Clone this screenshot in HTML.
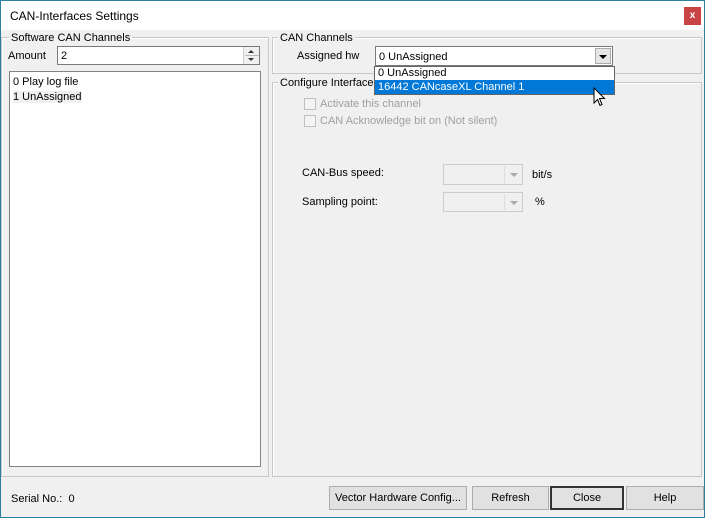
<!DOCTYPE html>
<html><head><style>
*{box-sizing:border-box;margin:0;padding:0}
html,body{width:705px;height:518px;overflow:hidden}
body{background:#f0f0f0;font-family:"Liberation Sans",Arial,sans-serif;font-size:11px;color:#000;position:relative;white-space:nowrap}
.a{position:absolute}
.win{left:0;top:0;width:705px;height:518px;border:1px solid #2b7fa0}
.title{left:1px;top:1px;width:703px;height:29px;background:#fff}
.gb{border:1px solid #c8c8c8;box-shadow:inset 1px 1px 0 #fff}
.lbl{background:#f0f0f0;padding:0 2px;line-height:13px}
.in{background:#fff;border:1px solid #7a7a7a}
.btn{background:#e1e1e1;border:1px solid #adadad;text-align:center;line-height:23px}
.dis{color:#a0a0a0}
.cb{width:12px;height:12px;border:1px solid #c0c0c0;background:#f4f4f4}
</style></head><body>
<div class="a win"></div>
<div class="a title"></div>
<div class="a" style="left:10px;top:9px;font-size:12px">CAN-Interfaces Settings</div>
<div class="a" style="left:684px;top:7px;width:17px;height:18px;background:#c94545;color:#fff;font-size:10px;font-weight:bold;text-align:center;line-height:17px">x</div>

<div class="a gb" style="left:1px;top:37px;width:268px;height:440px"></div>
<div class="a lbl" style="left:9px;top:32px">Software CAN Channels</div>
<div class="a" style="left:8px;top:50px">Amount</div>
<div class="a in" style="left:57px;top:46px;width:203px;height:19px;padding:3px 3px">2</div>
<div class="a" style="left:243px;top:47px;width:16px;height:17px;background:#f0f0f0;border-left:1px solid #ccc">
<div style="position:absolute;left:4px;top:3px;border:3px solid transparent;border-top:0;border-bottom:3px solid #333"></div>
<div style="position:absolute;left:1px;top:8px;width:14px;height:1px;background:#bbb"></div>
<div style="position:absolute;left:4px;top:11px;border:3px solid transparent;border-bottom:0;border-top:3px solid #333"></div></div>
<div class="a in" style="left:9px;top:71px;width:252px;height:396px;border-color:#828282">
<div style="padding:3px 3px 0;line-height:15px">0 Play log file<br><span style="background:#f0f0f0">1 UnAssigned</span></div></div>

<div class="a gb" style="left:272px;top:37px;width:430px;height:37px"></div>
<div class="a lbl" style="left:278px;top:32px">CAN Channels</div>
<div class="a" style="left:297px;top:50px">Assigned hw</div>
<div class="a in" style="left:375px;top:46px;width:238px;height:20px;padding:4px 3px">0 UnAssigned</div>
<div class="a" style="left:595px;top:48px;width:16px;height:16px;background:#e6e6e6;border:1px solid #aaa"><div style="position:absolute;left:3px;top:6px;border:4px solid transparent;border-bottom:0;border-top:4px solid #000"></div></div>

<div class="a gb" style="left:272px;top:82px;width:430px;height:395px"></div>
<div class="a lbl" style="left:278px;top:77px">Configure Interface</div>
<div class="a cb" style="left:304px;top:98px"></div>
<div class="a dis" style="left:320px;top:98px">Activate this channel</div>
<div class="a cb" style="left:304px;top:115px"></div>
<div class="a dis" style="left:320px;top:115px">CAN Acknowledge bit on (Not silent)</div>
<div class="a" style="left:302px;top:167px">CAN-Bus speed:</div>
<div class="a" style="left:443px;top:164px;width:80px;height:21px;border:1px solid #ccc;background:#f0f0f0"><div style="position:absolute;left:60px;top:1px;width:17px;height:17px;border-left:1px solid #ddd"><div style="position:absolute;left:5px;top:7px;border:4px solid transparent;border-bottom:0;border-top:4px solid #aaa"></div></div></div>
<div class="a" style="left:532px;top:169px">bit/s</div>
<div class="a" style="left:302px;top:196px">Sampling point:</div>
<div class="a" style="left:443px;top:192px;width:80px;height:20px;border:1px solid #ccc;background:#f0f0f0"><div style="position:absolute;left:60px;top:1px;width:17px;height:16px;border-left:1px solid #ddd"><div style="position:absolute;left:5px;top:7px;border:4px solid transparent;border-bottom:0;border-top:4px solid #aaa"></div></div></div>
<div class="a" style="left:535px;top:196px">%</div>

<div class="a" style="left:374px;top:66px;width:241px;height:29px;background:#fff;border:1px solid #646464">
<div style="padding:0 3px;line-height:13px;height:13px">0 UnAssigned</div>
<div style="background:#0078d7;color:#fff;padding:0 3px;line-height:14px;height:14px">16442 CANcaseXL Channel 1</div></div>
<svg class="a" style="left:593px;top:87px" width="14" height="22" viewBox="0 0 14 22"><path d="M1 1 L1 16 L4.5 12.5 L7 18.5 L9 17.5 L6.5 11.5 L11.5 11.5 Z" fill="#fff" stroke="#000" stroke-width="1"/></svg>

<div class="a" style="left:11px;top:493px">Serial No.:&nbsp; 0</div>
<div class="a btn" style="left:329px;top:486px;width:138px;height:24px">Vector Hardware Config...</div>
<div class="a btn" style="left:472px;top:486px;width:77px;height:24px">Refresh</div>
<div class="a btn" style="left:550px;top:486px;width:74px;height:24px;border:2px solid #333;line-height:21px">Close</div>
<div class="a btn" style="left:626px;top:486px;width:78px;height:24px">Help</div>
</body></html>
